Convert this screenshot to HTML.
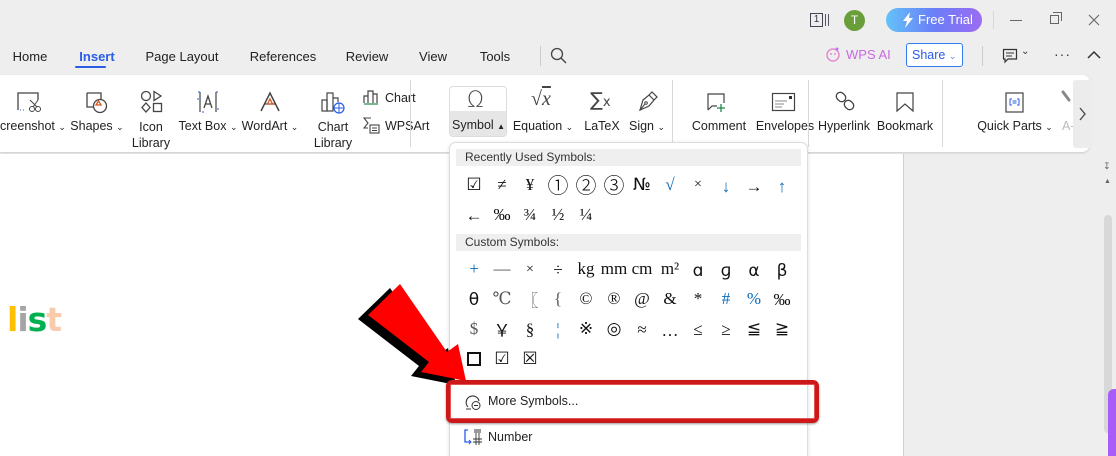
<!DOCTYPE html>
<html style="width:1116px;height:456px;overflow:hidden"><head><meta charset="utf-8"><style>
*{margin:0;padding:0;box-sizing:border-box}
body{width:1116px;height:456px;overflow:hidden;background:#eeeeee;font-family:"Liberation Sans","DejaVu Sans",sans-serif;position:relative;color:#222}
.a{position:absolute;white-space:nowrap}
.t{font-size:13px;color:#222}
.c{transform:translateX(-50%);text-align:center}
.lab{font-size:12.5px;color:#222;line-height:16px}
.sym{position:absolute;font-size:17px;transform:translate(-50%,-50%);font-family:"Liberation Serif","DejaVu Serif",serif;color:#111}
.b{color:#0a6ab8}
.sep{position:absolute;width:1px;background:#d8d8d8}
</style></head><body>
<div class="a" style="left:0;top:75px;width:1090px;height:77px;background:#fff;border-radius:0 8px 8px 0;box-shadow:0 1px 2px rgba(0,0,0,.15)"></div>
<div class="a" style="left:0;top:154px;width:903px;height:302px;background:#fff"></div>
<div class="a" style="left:903px;top:154px;width:1px;height:302px;background:#d0d0d0"></div>

<div class="a" style="left:810px;top:13px;width:13px;height:14px;border:1.3px solid #445;font-size:10px;line-height:11px;text-align:center;color:#334">1</div>
<div class="a" style="left:825px;top:14px;width:1px;height:12px;background:#556"></div>
<div class="a" style="left:828px;top:14px;width:1px;height:12px;background:#556"></div>
<div class="a" style="left:844px;top:10px;width:21px;height:21px;border-radius:50%;background:#6a9e3a;color:#fff;font-size:12px;line-height:21px;text-align:center">T</div>
<div class="a" style="left:886px;top:8px;width:96px;height:24px;border-radius:12px;background:linear-gradient(90deg,#64c2f8,#6a7ef8,#9b6cf2);color:#fff;font-size:13px;line-height:24px;padding-left:32px">Free Trial</div>
<svg class="a" style="left:902px;top:12px" width="12" height="16"><path d="M8 0 L1 9 H5 L3 16 L11 6 H7 Z" fill="#fff"/></svg>
<div class="sep" style="left:993px;top:11px;height:18px"></div>
<div class="a" style="left:1010px;top:20px;width:12px;height:1px;background:#666"></div>
<div class="a" style="left:1050px;top:15px;width:9px;height:9px;border:1px solid #666;background:#eee"></div>
<div class="a" style="left:1053px;top:12px;width:9px;height:9px;border-top:1px solid #666;border-right:1px solid #666"></div>
<svg class="a" style="left:1088px;top:14px" width="12" height="12"><path d="M1 1L11 11M11 1L1 11" stroke="#666" stroke-width="1.1"/></svg>

<div class="a t c" style="left:30px;top:49px">Home</div>
<div class="a t c" style="left:97px;top:49px;color:#2a5ce6;font-weight:bold">Insert</div>
<div class="a" style="left:75px;top:66px;width:31px;height:2px;background:#2a5ce6;border-radius:1px"></div>
<div class="a t c" style="left:182px;top:49px">Page Layout</div>
<div class="a t c" style="left:283px;top:49px">References</div>
<div class="a t c" style="left:367px;top:49px">Review</div>
<div class="a t c" style="left:433px;top:49px">View</div>
<div class="a t c" style="left:495px;top:49px">Tools</div>
<div class="sep" style="left:540px;top:46px;height:20px;background:#ccc"></div>
<svg class="a" style="left:550px;top:47px" width="18" height="18"><circle cx="7" cy="7" r="5.5" fill="none" stroke="#444" stroke-width="1.3"/><path d="M11 11L16 16" stroke="#444" stroke-width="1.4"/></svg>
<svg class="a" style="left:825px;top:46px" width="16" height="16"><circle cx="8" cy="9" r="6" fill="none" stroke="#e78ad0" stroke-width="1.5"/><circle cx="6" cy="8" r="1" fill="#e78ad0"/><circle cx="10" cy="8" r="1" fill="#e78ad0"/><circle cx="12" cy="3" r="1.5" fill="#b07af0"/></svg>
<div class="a t" style="left:846px;top:47px;color:#c86ae0">WPS AI</div>
<div class="a" style="left:906px;top:43px;width:57px;height:24px;border:1px solid #2f7cf0;border-radius:3px;background:#fff;color:#2a5ce6;font-size:12.5px;line-height:22px;padding-left:5px">Share <span style="font-size:9px;color:#5a84e8">&#8964;</span></div>
<div class="sep" style="left:982px;top:46px;height:20px;background:#ccc"></div>
<svg class="a" style="left:1002px;top:48px" width="16" height="16"><path d="M1.5 1.5H14.5V11H6L3 14V11H1.5Z" fill="none" stroke="#333" stroke-width="1.2"/><path d="M4 5H12M4 8H10" stroke="#333"/></svg>
<div class="a" style="left:1021px;top:46px;font-size:10px;color:#333">&#8964;</div>
<div class="a" style="left:1054px;top:46px;font-size:14px;color:#333;letter-spacing:1px">···</div>
<svg class="a" style="left:1087px;top:50px" width="14" height="10"><path d="M1 8L7 2L13 8" fill="none" stroke="#333" stroke-width="1.5"/></svg>

<svg class="a" style="left:16px;top:90px" width="26" height="24"><path d="M2 20V3H22V10" fill="none" stroke="#444" stroke-width="1.3"/><circle cx="16" cy="19" r="2.5" fill="none" stroke="#444"/><circle cx="22" cy="19" r="2.5" fill="none" stroke="#444"/><path d="M14 10L21 17M22 10L17 17" stroke="#444"/><path d="M4 20H10" stroke="#2a5ce6" stroke-dasharray="1 2"/></svg>
<div class="a lab" style="left:0;top:118px">creenshot <span style="font-size:9px">&#8964;</span></div>
<svg class="a" style="left:84px;top:90px" width="26" height="24"><path d="M3 3H17V9" fill="none" stroke="#444" stroke-width="1.3"/><path d="M3 3V17H9" fill="none" stroke="#444" stroke-width="1.3"/><circle cx="16" cy="16" r="6.5" fill="none" stroke="#444" stroke-width="1.3"/><path d="M12 15L14.5 11L17 15Z" fill="none" stroke="#d2561e" stroke-width="1.3"/></svg>
<div class="a lab c" style="left:97px;top:118px">Shapes <span style="font-size:9px">&#8964;</span></div>
<svg class="a" style="left:139px;top:89px" width="26" height="26"><circle cx="7" cy="7" r="4.5" fill="none" stroke="#444" stroke-width="1.3"/><path d="M15 2.5L22 7L15 11.5Z" fill="none" stroke="#444" stroke-width="1.3"/><path d="M7 14L11 18.5L7 23L3 18.5Z" fill="none" stroke="#444" stroke-width="1.3"/><rect x="14.5" y="14.5" width="8" height="8" fill="none" stroke="#444" stroke-width="1.3"/></svg>
<div class="a lab c" style="left:151px;top:119px">Icon<br>Library</div>
<svg class="a" style="left:196px;top:90px" width="24" height="24"><rect x="2" y="2" width="20" height="20" fill="none" stroke="#2a5ce6" stroke-dasharray="2 16"/><path d="M4 2V22M20 2V22" stroke="#444" stroke-width="1.2"/><path d="M8 18L12 6L16 18M9.5 14H14.5" fill="none" stroke="#444" stroke-width="1.3"/></svg>
<div class="a lab c" style="left:208px;top:118px">Text Box <span style="font-size:9px">&#8964;</span></div>
<svg class="a" style="left:258px;top:90px" width="24" height="24"><path d="M3 21L12 3L21 21" fill="none" stroke="#444" stroke-width="1.5"/><path d="M6 14L18 14" stroke="#444" stroke-width="1.2"/><path d="M9.5 14L12 9L14.5 14Z" fill="none" stroke="#d2561e" stroke-width="1.3"/></svg>
<div class="a lab c" style="left:270px;top:118px">WordArt <span style="font-size:9px">&#8964;</span></div>
<svg class="a" style="left:320px;top:90px" width="26" height="24"><rect x="2" y="10" width="5" height="11" fill="none" stroke="#444" stroke-width="1.2"/><rect x="7" y="3" width="6" height="18" fill="none" stroke="#444" stroke-width="1.2"/><path d="M13 8H18V12" fill="none" stroke="#444" stroke-width="1.2"/><circle cx="19" cy="18" r="5" fill="none" stroke="#2a5ce6" stroke-width="1.2"/><path d="M14 18H24M19 13V23" stroke="#2a5ce6"/></svg>
<div class="a lab c" style="left:333px;top:119px">Chart<br>Library</div>
<svg class="a" style="left:363px;top:89px" width="18" height="16"><path d="M1 14V7H5V14M5 14V2H10V14M10 14V5H14V14" fill="none" stroke="#444" stroke-width="1.2"/><path d="M1 15H15" stroke="#1e8a4a" stroke-width="1.2"/></svg>
<div class="a lab" style="left:385px;top:90px">Chart</div>
<svg class="a" style="left:363px;top:116px" width="18" height="18"><path d="M8 2H1L5 7L1 12H5" fill="none" stroke="#444" stroke-width="1.1"/><rect x="7" y="9" width="9" height="8" fill="none" stroke="#444" stroke-width="1.1"/><path d="M9 12H14M9 14.5H14" stroke="#444"/></svg>
<div class="a lab" style="left:385px;top:118px">WPSArt</div>
<div class="sep" style="left:410px;top:80px;height:67px"></div>

<div class="a" style="left:449px;top:86px;width:58px;height:51px;border:1px solid #ddd;border-radius:4px;background:#fff"></div>
<div class="a" style="left:450px;top:111px;width:56px;height:25px;background:#e6e6e6;border-radius:0 0 3px 3px"></div>
<div class="a" style="left:467px;top:88px;font-size:22px;font-family:'DejaVu Sans',sans-serif;font-weight:300;color:#444">Ω</div>
<div class="a lab" style="left:452px;top:117px">Symbol <span style="font-size:8px">&#9650;</span></div>
<div class="a" style="left:531px;top:88px;font-size:20px;font-family:'Liberation Serif',serif;font-style:italic;color:#444">√<span style="text-decoration:overline">x</span></div>
<div class="a lab c" style="left:543px;top:118px">Equation <span style="font-size:9px">&#8964;</span></div>
<div class="a" style="left:590px;top:89px;font-size:19px;color:#444;font-family:'DejaVu Sans',sans-serif">∑<span style="font-size:13px">x</span></div>
<div class="a lab c" style="left:602px;top:118px">LaTeX</div>
<svg class="a" style="left:637px;top:90px" width="22" height="22"><path d="M3 20L6 10L12 5L17 10L12 16Z" fill="none" stroke="#444" stroke-width="1.2"/><path d="M12 5L15 2L20 7L17 10" fill="none" stroke="#444" stroke-width="1.2"/><circle cx="9" cy="13" r="1.3" fill="none" stroke="#444"/><path d="M3 20L8 14" stroke="#444"/></svg>
<div class="a lab c" style="left:647px;top:118px">Sign <span style="font-size:9px">&#8964;</span></div>
<div class="sep" style="left:672px;top:80px;height:67px"></div>
<svg class="a" style="left:705px;top:91px" width="24" height="22"><path d="M3 19V3H19V12M3 19L7 15H12" fill="none" stroke="#444" stroke-width="1.2"/><path d="M16 13V21M12 17H20" stroke="#1e8a4a" stroke-width="1.3"/></svg>
<div class="a lab c" style="left:719px;top:118px">Comment</div>
<svg class="a" style="left:771px;top:92px" width="26" height="20"><rect x="1.5" y="1.5" width="22" height="17" fill="none" stroke="#444" stroke-width="1.2"/><rect x="18" y="4" width="3" height="3" fill="#333"/><path d="M4 9H16M4 12H13M4 15H11" stroke="#888"/></svg>
<div class="a lab c" style="left:785px;top:118px">Envelopes</div>
<div class="sep" style="left:808px;top:80px;height:67px"></div>
<svg class="a" style="left:834px;top:90px" width="22" height="22"><rect x="2" y="3" width="10" height="8" rx="4" transform="rotate(45 7 7)" fill="none" stroke="#444" stroke-width="1.3"/><rect x="10" y="11" width="10" height="8" rx="4" transform="rotate(45 15 15)" fill="none" stroke="#444" stroke-width="1.3"/></svg>
<div class="a lab c" style="left:844px;top:118px">Hyperlink</div>
<svg class="a" style="left:895px;top:91px" width="20" height="22"><path d="M2 2H18V20L10 13L2 20Z" fill="none" stroke="#444" stroke-width="1.2"/></svg>
<div class="a lab c" style="left:905px;top:118px">Bookmark</div>
<div class="sep" style="left:942px;top:80px;height:67px"></div>
<svg class="a" style="left:1004px;top:91px" width="22" height="22"><rect x="2" y="2" width="17" height="19" fill="none" stroke="#444" stroke-width="1.2"/><path d="M8 8H6V14H8M13 8H15V14H13M8.5 10H12.5M8.5 12H12.5" fill="none" stroke="#2a5ce6"/></svg>
<div class="a lab c" style="left:1015px;top:118px">Quick Parts <span style="font-size:9px">&#8964;</span></div>
<svg class="a" style="left:1060px;top:88px" width="14" height="18"><path d="M3 4L9 12" stroke="#888" stroke-width="3" stroke-linecap="round" fill="none"/></svg>
<div class="a lab" style="left:1062px;top:118px;color:#bbb">A-</div>
<div class="a" style="left:1073px;top:80px;width:19px;height:68px;background:#ececec;border-radius:3px"></div>
<svg class="a" style="left:1078px;top:107px" width="9" height="14"><path d="M2 1L7 7L2 13" fill="none" stroke="#444" stroke-width="1.3"/></svg>

<div class="a" style="left:1103px;top:161px;font-size:9px;color:#666">&#8615;</div>
<div class="a" style="left:1104px;top:178px;font-size:7px;color:#666">&#9650;</div>
<div class="a" style="left:1104px;top:215px;width:8px;height:218px;background:#d8d8d8;border-radius:4px"></div>
<div class="a" style="left:1108px;top:389px;width:10px;height:67px;background:#a85cf8;border-radius:6px 0 0 0"></div>

<div class="a" style="left:7px;top:300px;font-size:33px;font-weight:bold;font-family:'DejaVu Sans',sans-serif;letter-spacing:-1px"><span style="color:#ffc000">l</span><span style="color:#a5a5a5">i</span><span style="color:#00b050">s</span><span style="color:#f8cbad">t</span></div>

<div class="a" style="left:449px;top:142px;width:359px;height:320px;background:#fff;border:1px solid #ddd;border-radius:7px;box-shadow:0 1px 4px rgba(0,0,0,.12)"></div>
<div class="a" style="left:456px;top:149px;width:345px;height:17px;background:#efefef"></div>
<div class="a" style="left:465px;top:150px;font-size:12px;color:#333">Recently Used Symbols:</div>
<div class="a" style="left:456px;top:234px;width:345px;height:17px;background:#efefef"></div>
<div class="a" style="left:465px;top:235px;font-size:12px;color:#333">Custom Symbols:</div>

<div class="sym" style="left:474px;top:185px">☑</div>
<div class="sym" style="left:502px;top:185px">≠</div>
<div class="sym" style="left:530px;top:185px">¥</div>
<div class="sym" style="left:558px;top:185px;font-size:21px;font-family:'Noto Sans CJK SC',sans-serif;font-weight:300">①</div>
<div class="sym" style="left:586px;top:185px;font-size:21px;font-family:'Noto Sans CJK SC',sans-serif;font-weight:300">②</div>
<div class="sym" style="left:614px;top:185px;font-size:21px;font-family:'Noto Sans CJK SC',sans-serif;font-weight:300">③</div>
<div class="sym" style="left:642px;top:185px;font-family:'DejaVu Sans',sans-serif">№</div>
<div class="sym b" style="left:670px;top:185px">√</div>
<div class="sym" style="left:698px;top:185px;font-size:14px">×</div>
<div class="sym b" style="left:726px;top:187px">↓</div>
<div class="sym" style="left:754px;top:187px">→</div>
<div class="sym b" style="left:782px;top:187px">↑</div>
<div class="sym" style="left:474px;top:216px">←</div>
<div class="sym" style="left:502px;top:215px">‰</div>
<div class="sym" style="left:530px;top:215px">¾</div>
<div class="sym" style="left:558px;top:215px">½</div>
<div class="sym" style="left:586px;top:215px">¼</div>

<div class="sym b" style="left:474px;top:269px">+</div>
<div class="sym" style="left:502px;top:269px;color:#555">—</div>
<div class="sym" style="left:530px;top:270px;font-size:14px">×</div>
<div class="sym" style="left:558px;top:270px">÷</div>
<div class="sym" style="left:586px;top:269px">kg</div>
<div class="sym" style="left:614px;top:269px">mm</div>
<div class="sym" style="left:642px;top:269px">cm</div>
<div class="sym" style="left:670px;top:269px">m²</div>
<div class="sym" style="left:698px;top:271px;font-family:'DejaVu Sans',sans-serif">ɑ</div>
<div class="sym" style="left:726px;top:271px;font-family:'DejaVu Sans',sans-serif">ɡ</div>
<div class="sym" style="left:754px;top:271px;font-family:'DejaVu Sans',sans-serif">α</div>
<div class="sym" style="left:782px;top:271px;font-family:'DejaVu Sans',sans-serif">β</div>
<div class="sym" style="left:474px;top:300px;font-family:'DejaVu Sans',sans-serif">θ</div>
<div class="sym" style="left:502px;top:299px;color:#555">℃</div>
<div class="sym" style="left:530px;top:299px;color:#555">〖</div>
<div class="sym" style="left:558px;top:299px;color:#555">{</div>
<div class="sym" style="left:586px;top:299px">©</div>
<div class="sym" style="left:614px;top:299px">®</div>
<div class="sym" style="left:642px;top:299px">@</div>
<div class="sym" style="left:670px;top:299px">&amp;</div>
<div class="sym" style="left:698px;top:299px">*</div>
<div class="sym b" style="left:726px;top:299px">#</div>
<div class="sym b" style="left:754px;top:299px">%</div>
<div class="sym" style="left:782px;top:300px">‰</div>
<div class="sym" style="left:474px;top:329px;color:#555">$</div>
<div class="sym" style="left:502px;top:329px">￥</div>
<div class="sym" style="left:530px;top:330px">§</div>
<div class="sym b" style="left:558px;top:330px">¦</div>
<div class="sym" style="left:586px;top:329px">※</div>
<div class="sym" style="left:614px;top:329px">◎</div>
<div class="sym" style="left:642px;top:330px">≈</div>
<div class="sym" style="left:670px;top:331px">…</div>
<div class="sym" style="left:698px;top:330px">≤</div>
<div class="sym" style="left:726px;top:330px">≥</div>
<div class="sym" style="left:754px;top:329px">≦</div>
<div class="sym" style="left:782px;top:329px">≧</div>
<div class="a" style="left:467px;top:352px;width:14px;height:14px;border:2px solid #111"></div>
<div class="sym" style="left:502px;top:359px">☑</div>
<div class="sym" style="left:530px;top:359px">☒</div>

<svg class="a" style="left:0;top:0" width="1116" height="456">
<polygon points="400,284 447,352 458,344 466,381 421,372 429,362 368,315" fill="#000" transform="translate(-10,4)"/>
<polygon points="400,284 447,352 458,344 466,381 421,372 429,362 368,315" fill="#ff0000"/>
</svg>

<div class="a" style="left:446px;top:380px;width:373px;height:43px;border:4px solid #cc1818;border-radius:6px;box-shadow:inset 0 0 0 1px #e35555,0 1px 2px rgba(0,0,0,.4)"></div>
<svg class="a" style="left:464px;top:393px" width="18" height="18"><path d="M4 14A6.5 6.5 0 1 1 15 8" fill="none" stroke="#333" stroke-width="1.1"/><circle cx="12" cy="12.5" r="4" fill="#fff" stroke="#333"/><path d="M10 12.5H14" stroke="#333"/><path d="M2 16H7" stroke="#333"/></svg>
<div class="a" style="left:488px;top:394px;font-size:12.5px;color:#222">More Symbols...</div>
<svg class="a" style="left:463px;top:428px" width="20" height="18"><path d="M5 2H2V14H8" fill="none" stroke="#2a5ce6" stroke-width="1.3"/><path d="M6 12L8 14L6 16" fill="none" stroke="#2a5ce6"/><path d="M11 2H18M11 4H18M13 5V9M16 5V9M10 11H19M10 14H19M13 9V17M16 9V17" stroke="#333" stroke-width="0.9"/></svg>
<div class="a" style="left:488px;top:430px;font-size:12.5px;color:#222">Number</div>
</body></html>
